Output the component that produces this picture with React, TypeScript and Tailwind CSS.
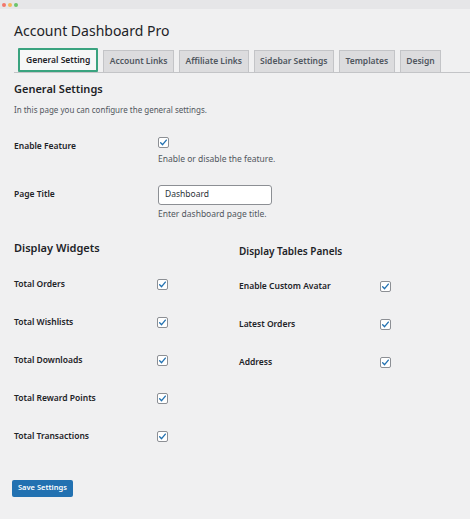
import React from "react";

function Check() {
  return (
    <span className="inline-flex h-[11px] w-[11px] items-center justify-center rounded-[2px] border border-[#8c8f94] bg-white">
      <svg viewBox="0 0 12 12" className="h-[9px] w-[9px]">
        <path d="M2.2 6.4 L4.8 8.9 L9.8 2.8" fill="none" stroke="#2271b1" strokeWidth="1.8" strokeLinecap="round" strokeLinejoin="round" />
      </svg>
    </span>
  );
}

const tabs = ["General Setting", "Account Links", "Affiliate Links", "Sidebar Settings", "Templates", "Design"];

function Row({ label, labelW }: { label: string; labelW: string }) {
  return (
    <div className="flex h-[38px] items-center">
      <div className={`${labelW} text-[8.5px] font-semibold text-[#1d2327]`}>{label}</div>
      <Check />
    </div>
  );
}

export default function App() {
  return (
    <div className="h-[523px] w-[474px] bg-white" style={{ fontFamily: '"Noto Sans", sans-serif' }}>
      <div className="h-[519px] w-[470px] bg-[#f0f0f1]">
        <div className="flex h-[9px] items-center gap-[2px] bg-[#e6e6e8] pl-[2px]">
          <span className="h-[4px] w-[4px] rounded-full bg-[#f2766a]" />
          <span className="h-[4px] w-[4px] rounded-full bg-[#f5b85a]" />
          <span className="h-[4px] w-[4px] rounded-full bg-[#6cc56a]" />
        </div>
        <div className="pl-[14px] pt-[10px]">
          <h1 className="text-[14px] leading-[24px] text-[#1d2327]">Account Dashboard Pro</h1>
        </div>
        <div className="ml-[14px] mt-[7px] flex h-[23px] items-end gap-[5px] border-b border-[#c3c4c7] pl-[4px]">
          {tabs.map((t, i) =>
            i === 0 ? (
              <div key={t} className="flex h-[24px] items-center rounded-[1px] border-2 border-[#3aa37f] bg-[#f6f7f7] px-[6px] text-[8.5px] font-semibold text-[#1d2327]">
                {t}
              </div>
            ) : (
              <div key={t} className="-mb-px flex h-[23px] items-center border border-[#c3c4c7] bg-[#dcdcde] px-[5.5px] text-[8.5px] font-semibold text-[#50575e]">
                {t}
              </div>
            )
          )}
        </div>
        <div className="pl-[14px]">
          <h2 className="mt-[8px] text-[11px] font-semibold leading-[16px] text-[#1d2327]">General Settings</h2>
          <p className="mt-[7px] text-[8px] leading-[12px] text-[#50575e]">In this page you can configure the general settings.</p>

          <div className="mt-[21px] flex">
            <div className="w-[144px] pt-[3px] text-[8.5px] font-semibold text-[#1d2327]">Enable Feature</div>
            <div className="flex flex-col">
              <Check />
              <span className="mt-[5px] text-[8.5px] text-[#50575e]">Enable or disable the feature.</span>
            </div>
          </div>

          <div className="mt-[19px] flex">
            <div className="flex h-[20px] w-[144px] items-center text-[8.5px] font-semibold text-[#1d2327]">Page Title</div>
            <div className="flex flex-col">
              <div className="flex h-[20px] w-[114px] items-center rounded-[3px] border border-[#8c8f94] bg-white px-[6px] text-[8.5px] text-[#2c3338]">
                Dashboard
              </div>
              <span className="mt-[3px] text-[8.5px] text-[#50575e]">Enter dashboard page title.</span>
            </div>
          </div>

          <div className="mt-[19px] grid grid-cols-[225px_1fr]">
            <div>
              <h3 className="text-[11px] font-semibold leading-[16px] text-[#1d2327]">Display Widgets</h3>
              <div className="mt-[10px]">
                <Row label="Total Orders" labelW="w-[143px]" />
                <Row label="Total Wishlists" labelW="w-[143px]" />
                <Row label="Total Downloads" labelW="w-[143px]" />
                <Row label="Total Reward Points" labelW="w-[143px]" />
                <Row label="Total Transactions" labelW="w-[143px]" />
              </div>
            </div>
            <div className="pt-[3px]">
              <h3 className="text-[10px] font-semibold leading-[16px] text-[#1d2327]">Display Tables Panels</h3>
              <div className="mt-[9px]">
                <Row label="Enable Custom Avatar" labelW="w-[141px]" />
                <Row label="Latest Orders" labelW="w-[141px]" />
                <Row label="Address" labelW="w-[141px]" />
              </div>
            </div>
          </div>

          <button className="-ml-[2px] mt-[24px] flex h-[17px] items-center rounded-[2px] bg-[#2271b1] px-[6px] text-[7.5px] font-semibold text-white">
            Save Settings
          </button>
        </div>
      </div>
    </div>
  );
}
